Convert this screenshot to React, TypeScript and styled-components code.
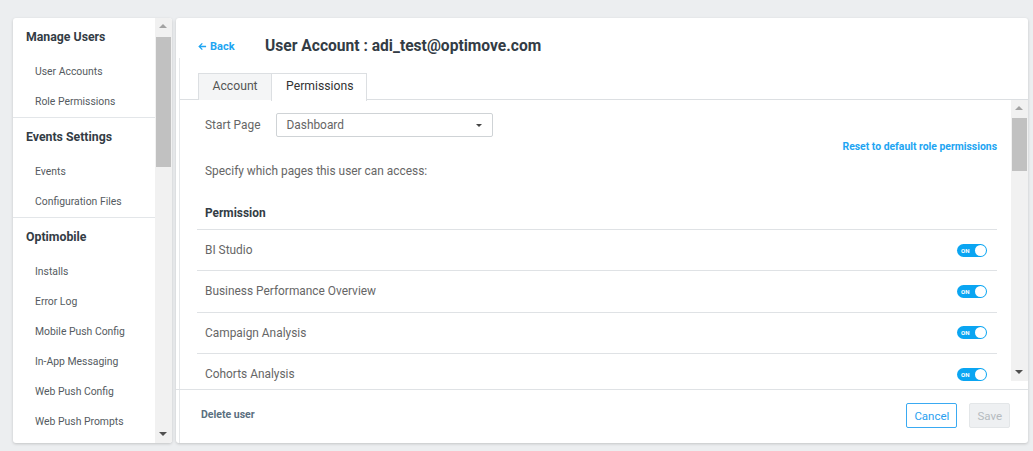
import React from "react";
import styled, { createGlobalStyle } from "styled-components";

const Global = createGlobalStyle`
  html, body { margin: 0; padding: 0; }
  body {
    background: #eceef0;
    font-family: Roboto, "Noto Sans", Arial, sans-serif;
    width: 1033px;
    height: 451px;
    overflow: hidden;
  }
  * { box-sizing: border-box; }
`;

const Page = styled.div`
  display: flex;
  gap: 4px;
  padding: 18px 5px 8px 13px;
  height: 451px;
`;

const Card = styled.div<{ $grow?: boolean }>`
  background: #fff;
  border-radius: 3px;
  box-shadow: 0 1px 3px rgba(0, 0, 0, 0.18);
  height: 425px;
  overflow: hidden;
  display: flex;
  ${(p) => (p.$grow ? "flex: 1;" : "width: 159px;")}
`;

const SideScroll = styled.div`
  flex: 1;
  overflow: hidden;
`;

const Section = styled.div<{ $last?: boolean }>`
  border-bottom: ${(p) => (p.$last ? "none" : "1px solid #e3e6e9")};
`;

const SectionTitle = styled.div`
  padding: 8px 0 0 13px;
  line-height: 22px;
  height: 30px;
  margin-bottom: 9px;
  font-size: 12.3px;
  font-weight: 700;
  color: #333c45;
`;

const SideItem = styled.div`
  padding-left: 22px;
  line-height: 30px;
  height: 30px;
  font-size: 10.4px;
  color: #555b61;
  white-space: nowrap;
`;

const ScrollBar = styled.div`
  width: 17px;
  background: #f1f1f1;
  position: relative;
  flex: none;
  align-self: stretch;
`;

const Arrow = styled.div<{ $down?: boolean }>`
  position: absolute;
  left: 4px;
  ${(p) => (p.$down ? "bottom: 7px;" : "top: 6px;")}
  width: 0;
  height: 0;
  border-left: 4.5px solid transparent;
  border-right: 4.5px solid transparent;
  ${(p) =>
    p.$down
      ? "border-top: 4.5px solid #505050;"
      : "border-bottom: 4.5px solid #a3a3a3;"}
`;

const Thumb = styled.div`
  position: absolute;
  left: 1px;
  right: 1px;
  background: #c1c1c1;
`;

const Main = styled.div`
  flex: 1;
  display: flex;
  flex-direction: column;
`;

const Header = styled.div`
  height: 40px;
  display: flex;
  align-items: flex-end;
  padding-left: 22px;
  padding-bottom: 4px;
`;

const Back = styled.a`
  display: flex;
  align-items: center;
  gap: 3px;
  color: #1ea5f2;
  font-size: 11px;
  font-weight: 700;
  width: 67px;
  height: 16px;
`;

const Title = styled.h1`
  margin: 0;
  font-size: 15.6px;
  font-weight: 700;
  color: #333c45;
  line-height: 20px;
  position: relative;
  top: 2px;
`;

const Body = styled.div`
  flex: 1;
  margin-left: 3px;
  border-left: 1px solid #e6e8ea;
  display: flex;
  flex-direction: column;
  min-height: 0;
`;

const Tabs = styled.div`
  display: flex;
  padding: 15px 0 0 19px;
  border-bottom: 1px solid #dcdfe2;
  height: 42px;
`;

const Tab = styled.div<{ $active?: boolean }>`
  height: 27px;
  padding: 0 13.5px 2px;
  display: flex;
  align-items: center;
  font-size: 12.2px;
  border: 1px solid #dcdfe2;
  border-bottom: none;
  margin-left: -1px;
  background: ${(p) => (p.$active ? "#fff" : "#f4f5f6")};
  color: ${(p) => (p.$active ? "#333" : "#555")};
  position: relative;
  ${(p) => (p.$active ? "margin-bottom: -1px; height: 28px; padding: 0 13px 3px 14px;" : "")}
`;

const ContentWrap = styled.div`
  display: flex;
  height: 281px;
`;

const Content = styled.div`
  flex: 1;
  overflow: hidden;
  padding: 13px 14px 0 17px;
`;

const StartRow = styled.div`
  display: flex;
  align-items: center;
  padding-left: 8px;
  gap: 16px;
  font-size: 11.9px;
  color: #666;
`;

const Select = styled.div`
  width: 217px;
  height: 24px;
  border: 1px solid #cfd3d6;
  border-radius: 2px;
  display: flex;
  align-items: center;
  justify-content: space-between;
  padding: 0 10px 0 9px;
  color: #666;
`;

const Caret = styled.span`
  width: 0;
  height: 0;
  border-left: 3.5px solid transparent;
  border-right: 3.5px solid transparent;
  border-top: 3.5px solid #444;
`;

const ResetRow = styled.div`
  display: flex;
  justify-content: flex-end;
  margin-top: 4px;
  height: 12px;
  line-height: 12px;
`;

const ResetLink = styled.a`
  color: #1ea5f2;
  font-size: 10.4px;
  font-weight: 700;
`;

const Specify = styled.div`
  padding-left: 8px;
  margin-top: 10px;
  font-size: 11.9px;
  color: #666;
  line-height: 16px;
`;

const PermHeader = styled.div`
  padding-left: 8px;
  margin-top: 26px;
  height: 25px;
  font-size: 11.9px;
  font-weight: 700;
  color: #333c45;
  line-height: 16px;
  border-bottom: 1px solid #dfe2e5;
`;

const PermRow = styled.div`
  height: 41.3px;
  display: flex;
  align-items: center;
  justify-content: space-between;
  padding: 0 10px 0 8px;
  border-bottom: 1px solid #dfe2e5;
  font-size: 11.9px;
  color: #666;
`;

const Toggle = styled.div`
  width: 30px;
  height: 13px;
  border-radius: 7px;
  background: #0aa5f2;
  position: relative;
  display: flex;
  align-items: center;
  padding-left: 4px;
  color: #fff;
  font-size: 6px;
  font-weight: 700;
  &::after {
    content: "";
    position: absolute;
    right: 1px;
    top: 1px;
    width: 11px;
    height: 11px;
    border-radius: 50%;
    background: #fff;
  }
`;

const Footer = styled.div`
  margin-top: 8px;
  border-top: 1px solid #dfe2e5;
  flex: 1;
  display: flex;
  align-items: flex-start;
  justify-content: space-between;
  padding: 13px 18px 0 21px;
  margin-left: -4px;
`;

const Delete = styled.a`
  font-size: 10.5px;
  font-weight: 700;
  color: #5a6f80;
  padding-left: 4px;
  line-height: 24px;
`;

const Buttons = styled.div`
  display: flex;
  gap: 12px;
`;

const Btn = styled.button<{ $disabled?: boolean }>`
  height: 25px;
  padding: 0 7px;
  font-family: inherit;
  font-size: 11.5px;
  border-radius: 2px;
  background: ${(p) => (p.$disabled ? "#eef0f2" : "#fff")};
  border: 1px solid ${(p) => (p.$disabled ? "#e3e6e8" : "#3aaaf2")};
  color: ${(p) => (p.$disabled ? "#b5bbc0" : "#2a9ff0")};
`;

const sections = [
  { title: "Manage Users", items: ["User Accounts", "Role Permissions"] },
  { title: "Events Settings", items: ["Events", "Configuration Files"] },
  {
    title: "Optimobile",
    items: [
      "Installs",
      "Error Log",
      "Mobile Push Config",
      "In-App Messaging",
      "Web Push Config",
      "Web Push Prompts",
    ],
  },
];

const perms = ["BI Studio", "Business Performance Overview", "Campaign Analysis", "Cohorts Analysis"];

export default function App() {
  return (
    <>
      <Global />
      <Page>
        <Card>
          <SideScroll>
            {sections.map((s, i) => (
              <Section key={s.title} $last={i === sections.length - 1}>
                <SectionTitle>{s.title}</SectionTitle>
                {s.items.map((it) => (
                  <SideItem key={it}>{it}</SideItem>
                ))}
              </Section>
            ))}
          </SideScroll>
          <ScrollBar>
            <Arrow />
            <Thumb style={{ top: 19, height: 130 }} />
            <Arrow $down />
          </ScrollBar>
        </Card>
        <Card $grow>
          <Main>
            <Header>
              <Back>
                <svg width="9" height="9" viewBox="0 0 10 10" fill="none" stroke="#1ea5f2" strokeWidth="1.4">
                  <path d="M9 5H1.5M4.8 1.5L1.3 5l3.5 3.5" />
                </svg>
                Back
              </Back>
              <Title>User Account : adi_test@optimove.com</Title>
            </Header>
            <Body>
              <Tabs>
                <Tab>Account</Tab>
                <Tab $active>Permissions</Tab>
              </Tabs>
              <ContentWrap>
                <Content>
                  <StartRow>
                    Start Page
                    <Select>
                      Dashboard
                      <Caret />
                    </Select>
                  </StartRow>
                  <ResetRow>
                    <ResetLink>Reset to default role permissions</ResetLink>
                  </ResetRow>
                  <Specify>Specify which pages this user can access:</Specify>
                  <PermHeader>Permission</PermHeader>
                  {perms.map((p) => (
                    <PermRow key={p}>
                      {p}
                      <Toggle>ON</Toggle>
                    </PermRow>
                  ))}
                </Content>
                <ScrollBar>
                  <Arrow />
                  <Thumb style={{ top: 18, height: 53 }} />
                  <Arrow $down />
                </ScrollBar>
              </ContentWrap>
              <Footer>
                <Delete>Delete user</Delete>
                <Buttons>
                  <Btn>Cancel</Btn>
                  <Btn $disabled>Save</Btn>
                </Buttons>
              </Footer>
            </Body>
          </Main>
        </Card>
      </Page>
    </>
  );
}
